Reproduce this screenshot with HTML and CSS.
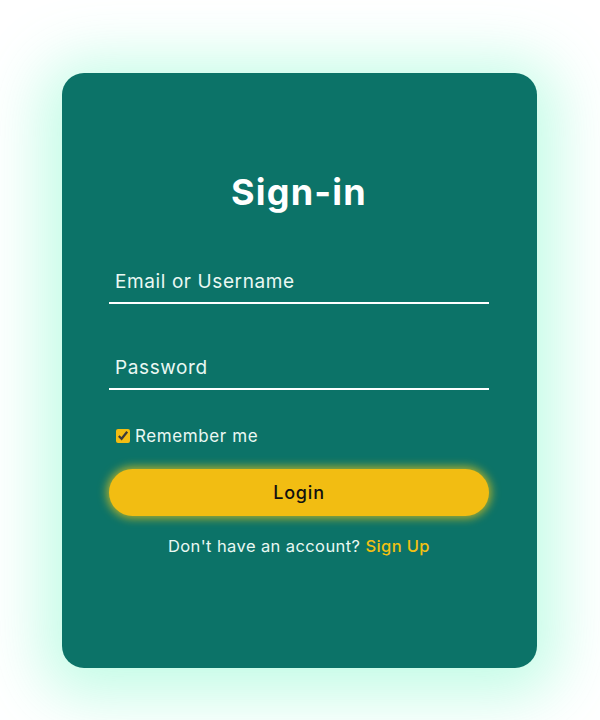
FILE: index.html
```html
<!DOCTYPE html>
<html lang="en">
<head>
<meta charset="utf-8">
<title>Sign-in</title>
<link rel="stylesheet" href="styles.css">
</head>
<body>
<main class="page">
  <form class="card" onsubmit="return false">
    <h1 class="title">Sign-in</h1>
    <div class="field">
      <input class="input" type="text" placeholder="Email or Username">
    </div>
    <div class="field">
      <input class="input" type="password" placeholder="Password">
    </div>
    <label class="remember">
      <input class="check" type="checkbox" checked>
      <span>Remember me</span>
    </label>
    <button class="login" type="submit">Login</button>
    <p class="signup">Don't have an account? <a class="signup-link" href="#">Sign Up</a></p>
  </form>
</main>
</body>
</html>
```
FILE: styles.css
```css
* { box-sizing: border-box; }
html, body { margin: 0; padding: 0; background: #ffffff; }
body {
  font-family: Inter, "Open Sans", "Liberation Sans", sans-serif;
  width: 600px;
  height: 720px;
  overflow: hidden;
}
.page {
  display: flex;
  justify-content: flex-start;
  padding: 73px 0 0 62px;
}
.card {
  width: 475px;
  height: 595px;
  background: #0c7368;
  border-radius: 22px;
  box-shadow: 0 8px 60px 20px rgba(185, 252, 226, 0.85);
  padding: 97px 48px 0 47px;
  display: flex;
  flex-direction: column;
}
.title {
  margin: 0;
  height: 44px;
  line-height: 44px;
  text-align: center;
  color: #ffffff;
  font-size: 36px;
  font-weight: 700;
  letter-spacing: 1.2px;
}
.field {
  margin-top: 46px;
}
.field + .field { margin-top: 42px; }
.input {
  display: block;
  width: 100%;
  height: 44px;
  border: none;
  border-bottom: 2px solid #ffffff;
  background: transparent;
  padding: 0 6px;
  font-family: inherit;
  font-size: 19px;
  letter-spacing: 0.6px;
  color: #ffffff;
  outline: none;
}
.input::placeholder { color: #eaf8f3; opacity: 1; }
.remember {
  margin-top: 36px;
  height: 20px;
  display: flex;
  align-items: center;
  gap: 3px;
  padding-left: 3px;
  color: #eaf8f3;
  font-size: 17px;
  letter-spacing: 0.6px;
}
.check {
  margin: 0 2px 0 4px;
  width: 14px;
  height: 14px;
  accent-color: #f2bd12;
}
.login {
  margin-top: 23px;
  height: 47px;
  border: none;
  border-radius: 24px;
  background: #f2bd12;
  box-shadow: 0 0 10px 2px rgba(242, 200, 20, 0.75);
  font-family: inherit;
  font-size: 18px;
  font-weight: 500;
  letter-spacing: 0.8px;
  color: #111111;
  cursor: pointer;
}
.signup {
  margin: 19px 0 0;
  line-height: 22px;
  text-align: center;
  font-size: 16.5px;
  letter-spacing: 0.4px;
  color: #eaf8f3;
}
.signup-link {
  color: #f2c012;
  font-weight: 500;
  text-decoration: none;
}
```
